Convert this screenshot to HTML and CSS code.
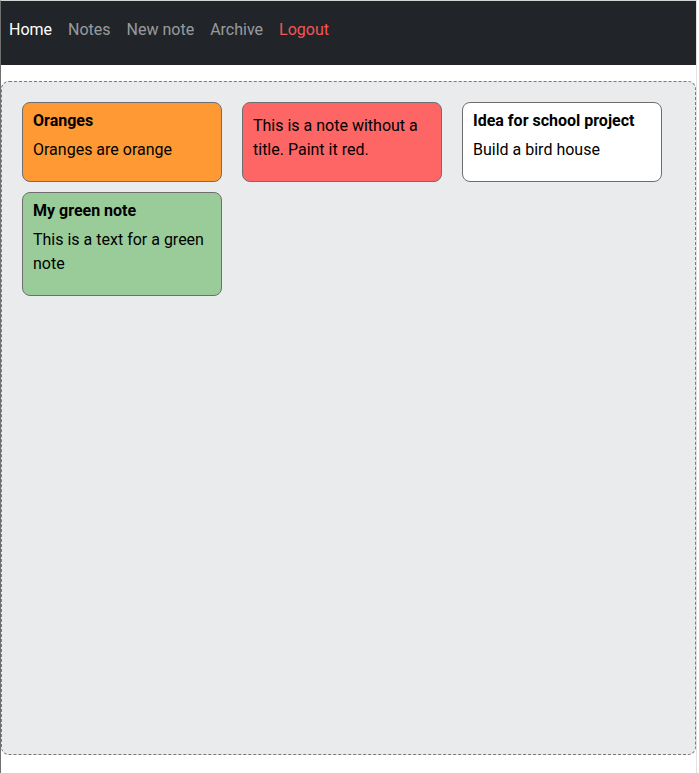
FILE: index.html
```html
<!DOCTYPE html>
<html lang="en">
<head>
    <meta charset="UTF-8">
    <meta name="viewport" content="width=device-width, initial-scale=1.0">
    <title>Notes</title>
    <link rel="stylesheet" href="styles.css">
</head>
<body>
    <div class="page">
        <!-- Navbar -->
        <nav class="navbar">
            <a href="#" class="active">Home</a>
            <a href="#notes">Notes</a>
            <a href="#new">New note</a>
            <a href="#archive">Archive</a>
            <a href="#logout" class="logout">Logout</a>
        </nav>

        <!-- Notes board -->
        <div class="board">
            <div class="note orange">
                <h5>Oranges</h5>
                <p>Oranges are orange</p>
            </div>
            <div class="note red">
                <p>This is a note without a title. Paint it red.</p>
            </div>
            <div class="note white">
                <h5>Idea for school project</h5>
                <p>Build a bird house</p>
            </div>
            <div class="note green">
                <h5>My green note</h5>
                <p>This is a text for a green note</p>
            </div>
        </div>
    </div>
</body>
</html>
```

FILE: styles.css
```css
/* General Reset */
* {
    margin: 0;
    padding: 0;
    box-sizing: border-box;
}

body {
    font-family: Roboto, 'Liberation Sans', sans-serif;
    font-size: 16px;
    line-height: 1.5;
    color: #000;
    background: #fff;
}

.page {
    width: 697px;
    min-height: 773px;
    border-left: 1px solid #707070;
    border-top: 1px solid #d4d4d4;
    border-right: 1px solid #e2e2e2;
}

/* Navbar */
.navbar {
    display: flex;
    height: 64px;
    padding-top: 9px;
    background: #212529;
}

.navbar a {
    padding: 8px;
    text-decoration: none;
    color: rgba(255, 255, 255, 0.55);
}

.navbar a.active {
    color: #fff;
}

.navbar a.logout {
    color: #f45555;
}

/* Notes board */
.board {
    display: flex;
    flex-wrap: wrap;
    align-items: flex-start;
    align-content: flex-start;
    gap: 10px 20px;
    height: 674px;
    margin-top: 16px;
    padding: 20px;
    background: #eaebed;
    border: 1px dashed #7a7a7a;
    border-radius: 8px;
}

.note {
    width: 200px;
    padding: 10px;
    border: 1px solid #6e6e6e;
    border-radius: 8px;
}

.note h5 {
    font-size: 16px;
    font-weight: bold;
    line-height: 1;
    margin-bottom: 8px;
}

.note p {
    padding-top: 1px;
    margin-bottom: 9px;
}

.orange {
    background: #fe9933;
}

.red {
    background: #fe6666;
}

.white {
    background: #fff;
}

.green {
    background: #99cc99;
}
```
